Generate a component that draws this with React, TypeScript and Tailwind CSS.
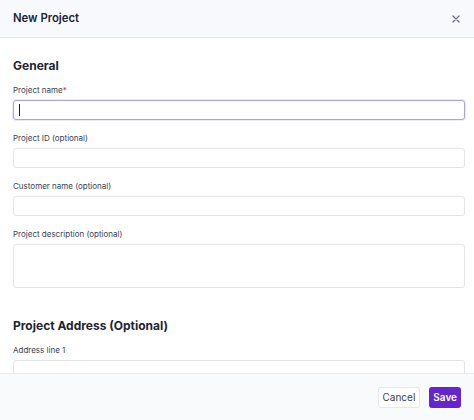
export default function App() {
    return (
        <div className="w-[474px] h-[420px] bg-white flex flex-col overflow-hidden text-[#1f2937]" style={{ fontFamily: "Inter, 'Noto Sans', sans-serif" }}>
            <div className="h-[38px] shrink-0 bg-[#f8f9fc] border-b border-[#e8eaef] flex items-center justify-between pl-[13px] pr-[14px]">
                <h2 className="text-[11.3px] font-semibold text-[#1e2433]">New Project</h2>
                <svg width="8" height="8" viewBox="0 0 8 8" className="text-[#6b7280]">
                    <path d="M1 1L7 7M7 1L1 7" stroke="currentColor" strokeWidth="1.3" strokeLinecap="round" />
                </svg>
            </div>

            <div className="flex-1 overflow-hidden pl-[13px] pr-[9px] pt-[19px]">
                <h3 className="text-[12px] leading-[18px] font-bold text-[#1e2433]">General</h3>

                <div className="mt-[9px] flex flex-col gap-[12px]">
                    <div>
                        <label className="block text-[8px] leading-[12px] text-[#374151]">
                            Project name<span className="text-[#e11d48]">*</span>
                        </label>
                        <div className="mt-[4px] h-[20px] rounded-[3px] border border-[#aaa3e6] bg-white ring-1 ring-[#ece9fb] flex items-center pl-[5px]">
                            <span className="w-px h-[12px] bg-[#111827]"></span>
                        </div>
                    </div>
                    <div>
                        <label className="block text-[8px] leading-[12px] text-[#374151]">Project ID (optional)</label>
                        <div className="mt-[4px] h-[20px] rounded-[3px] border border-[#e3e5ea] bg-white"></div>
                    </div>
                    <div>
                        <label className="block text-[8px] leading-[12px] text-[#374151]">Customer name (optional)</label>
                        <div className="mt-[4px] h-[20px] rounded-[3px] border border-[#e3e5ea] bg-white"></div>
                    </div>
                    <div>
                        <label className="block text-[8px] leading-[12px] text-[#374151]">Project description (optional)</label>
                        <div className="mt-[4px] h-[44px] rounded-[3px] border border-[#e3e5ea] bg-white"></div>
                    </div>
                </div>

                <h3 className="mt-[29px] text-[12px] leading-[18px] font-bold text-[#1e2433]">Project Address (Optional)</h3>
                <div className="mt-[9px]">
                    <label className="block text-[8px] leading-[12px] text-[#374151]">Address line 1</label>
                    <div className="mt-[4px] h-[20px] rounded-[3px] border border-[#e3e5ea] bg-white"></div>
                </div>
            </div>

            <div className="h-[47px] shrink-0 bg-[#f9fafc] border-t border-[#e8eaef] flex items-center justify-end gap-[9px] pr-[13px]">
                <button className="h-[21px] px-[4px] rounded-[3px] border border-[#e5e7eb] bg-white text-[10px] text-[#374151]">Cancel</button>
                <button className="h-[21px] px-[4px] rounded-[3px] bg-[#6425cf] text-[10px] font-semibold text-white">Save</button>
            </div>
        </div>
    )
}
